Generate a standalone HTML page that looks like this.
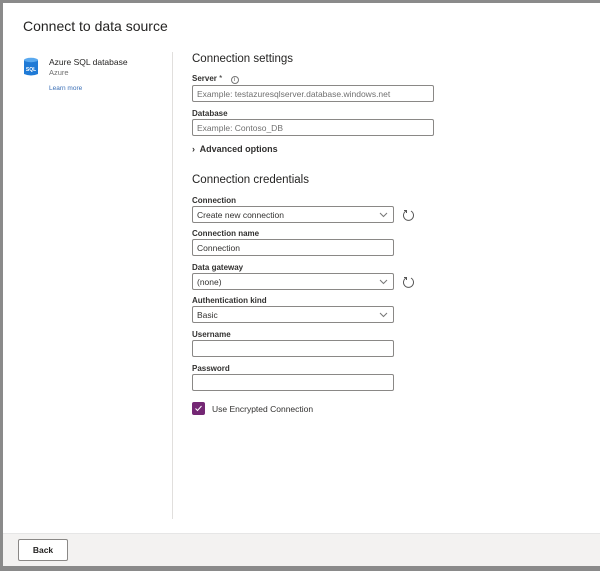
<!DOCTYPE html>
<html><head><style>
*{box-sizing:border-box;margin:0;padding:0}
body{width:600px;height:571px;background:#8a8a8a;position:relative;overflow:hidden;font-family:"Liberation Sans",sans-serif;color:#252423}
.dlg{position:absolute;left:3px;top:3px;width:600px;height:563px;background:#fff}
.t{position:absolute;left:20px;top:15px;font-size:14px;color:#252423}
.abs{position:absolute}
.lbl{position:absolute;left:189px;font-size:8px;font-weight:bold;color:#323130}
.in{position:absolute;left:189px;height:17px;border:1px solid #8a8886;border-radius:2px;font-size:8.5px;padding:3px 4px;color:#323130}
.ph{color:#707070}
.chev{position:absolute;right:5px;top:3px;width:9px;height:9px}
.ref{position:absolute;left:399px;width:13px;height:13px}
.h{position:absolute;left:189px;font-size:11.5px;color:#252423}
</style></head><body>
<div class="dlg">
<div class="t">Connect to data source</div>
<svg class="abs" style="left:21px;top:54px" width="14" height="20" viewBox="0 0 14 20"><path d="M0 3 Q7 0 14 3 V17 Q7 20 0 17Z" fill="#1f7ad6"/><ellipse cx="7" cy="3" rx="7" ry="2.2" fill="#5aa9ef"/><text x="7" y="14" font-size="5" fill="#fff" text-anchor="middle" font-family="Liberation Sans" font-weight="bold">SQL</text></svg>
<div class="abs" style="left:46px;top:54px;font-size:8.5px;color:#252423">Azure SQL database</div>
<div class="abs" style="left:46px;top:65px;font-size:7.5px;color:#707070">Azure</div>
<div class="abs" style="left:46px;top:82px;font-size:6.5px;color:#3b6fb6">Learn more</div>
<div class="abs" style="left:169px;top:49px;width:1px;height:467px;background:#e1dfdd"></div>
<div class="h" style="top:50px">Connection settings</div>
<div class="lbl" style="top:71px">Server <span style="font-weight:normal">*</span> <span style="display:inline-block;margin-left:6px;width:8px;height:8px;border:1px solid #777;border-radius:50%;font-size:5px;text-align:center;line-height:6px;font-weight:normal">i</span></div>
<div class="in ph" style="top:82px;width:242px">Example: testazuresqlserver.database.windows.net</div>
<div class="lbl" style="top:106px">Database</div>
<div class="in ph" style="top:116px;width:242px">Example: Contoso_DB</div>
<div class="lbl" style="top:141px;font-size:9px">›&nbsp; Advanced options</div>
<div class="h" style="top:171px">Connection credentials</div>
<div class="lbl" style="top:193px">Connection</div>
<div class="in" style="top:203px;width:202px">Create new connection<svg class="chev" viewBox="0 0 9 9"><path d="M1 3l3.5 3.5L8 3" stroke="#777" fill="none"/></svg></div>
<svg class="ref" style="top:205px" viewBox="0 0 13 13"><path d="M4 3A5 5 0 1 0 9 3" stroke="#555" fill="none"/><path d="M2 2.5h2.5V5" stroke="#555" fill="none"/></svg>
<div class="lbl" style="top:226px">Connection name</div>
<div class="in" style="top:236px;width:202px">Connection</div>
<div class="lbl" style="top:260px">Data gateway</div>
<div class="in" style="top:270px;width:202px">(none)<svg class="chev" viewBox="0 0 9 9"><path d="M1 3l3.5 3.5L8 3" stroke="#777" fill="none"/></svg></div>
<svg class="ref" style="top:272px" viewBox="0 0 13 13"><path d="M4 3A5 5 0 1 0 9 3" stroke="#555" fill="none"/><path d="M2 2.5h2.5V5" stroke="#555" fill="none"/></svg>
<div class="lbl" style="top:293px">Authentication kind</div>
<div class="in" style="top:303px;width:202px">Basic<svg class="chev" viewBox="0 0 9 9"><path d="M1 3l3.5 3.5L8 3" stroke="#777" fill="none"/></svg></div>
<div class="lbl" style="top:327px">Username</div>
<div class="in" style="top:337px;width:202px"></div>
<div class="lbl" style="top:361px">Password</div>
<div class="in" style="top:371px;width:202px"></div>
<div class="abs" style="left:189px;top:399px;width:13px;height:13px;background:#742774;border-radius:2px"><svg width="13" height="13" viewBox="0 0 13 13"><path d="M3.5 6.5l2 2 4-4.5" stroke="#fff" fill="none" stroke-width="1"/></svg></div>
<div class="abs" style="left:209px;top:401px;font-size:8.5px;color:#323130">Use Encrypted Connection</div>
<div class="abs" style="left:0;top:530px;width:600px;height:33px;background:#f3f2f1;border-top:1px solid #e6e6e6"></div>
<div class="abs" style="left:15px;top:536px;width:50px;height:22px;background:#fff;border:1px solid #8a8886;border-radius:2px;font-size:8.5px;font-weight:bold;text-align:center;line-height:20px">Back</div>
</div>
</body></html>
